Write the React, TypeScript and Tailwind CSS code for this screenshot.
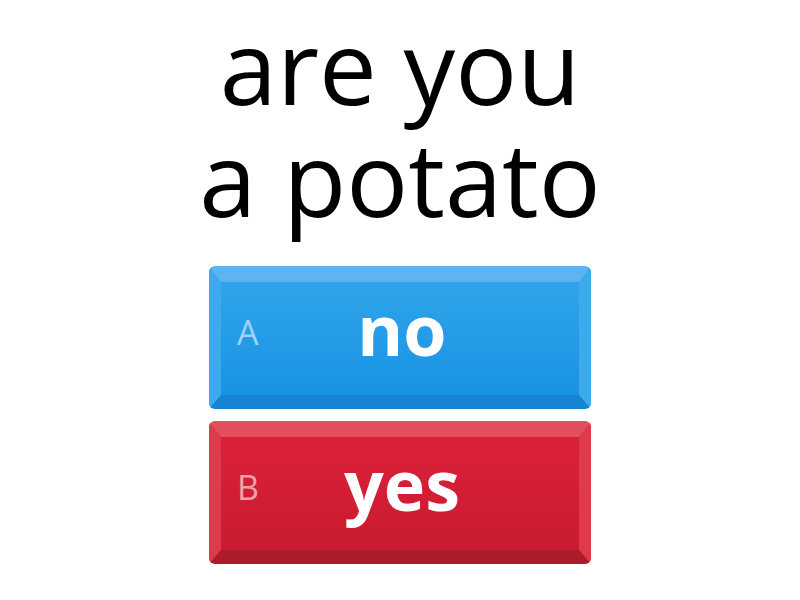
import React from "react";

const Answer = ({ letter, text, tone }: { letter: string; text: string; tone: "blue" | "red" }) => {
  const skin =
    tone === "blue"
      ? "border-t-[#5cb5f0] border-x-[#3daaed] border-b-[#1684d2] bg-gradient-to-b from-[#2fa4eb] to-[#1893e3]"
      : "border-t-[#e24f5e] border-x-[#dd3a4c] border-b-[#ad1a2a] bg-gradient-to-b from-[#db2139] to-[#c91b30]";
  const letterColor = tone === "blue" ? "text-[#9fd3f7]" : "text-[#f0a0a8]";

  return (
    <div
      className={`w-[382px] h-[143px] rounded-md border-t-[16px] border-x-[12px] border-b-[14px] flex items-center pb-[14px] ${skin}`}
    >
      <span className={`w-[40px] pl-[16px] text-[34px] leading-none ${letterColor}`}>{letter}</span>
      <span className="flex-1 text-center pr-[36px] text-[70px] font-bold text-white leading-none -mt-[6px]">
        {text}
      </span>
    </div>
  );
};

export default function App() {
  return (
    <div className="w-[800px] h-[600px] bg-white flex flex-col items-center font-['Open_Sans',sans-serif]">
      <h1 className="mt-[9px] text-center text-[103px] leading-[112px] text-black font-normal">
        are you
        <br />
        a potato
      </h1>
      <div className="mt-[33px] flex flex-col gap-[12px]">
        <Answer letter="A" text="no" tone="blue" />
        <Answer letter="B" text="yes" tone="red" />
      </div>
    </div>
  );
}
